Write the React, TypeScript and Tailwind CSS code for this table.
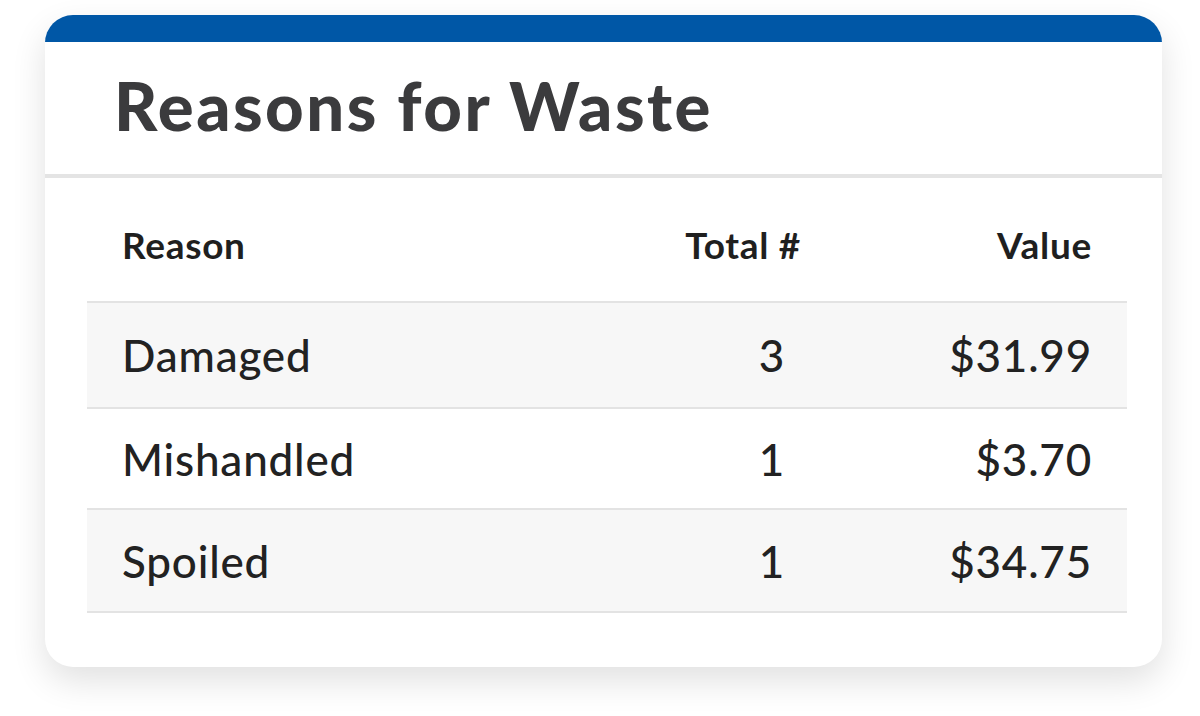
const rows = [
  { reason: "Damaged", total: 3, value: "$31.99", shaded: true, h: "h-[106px]" },
  { reason: "Mishandled", total: 1, value: "$3.70", shaded: false, h: "h-[101px]" },
  { reason: "Spoiled", total: 1, value: "$34.75", shaded: true, h: "h-[103px]" },
];

export default function App() {
  return (
    <div className="min-h-[716px] w-[1200px] bg-white pt-[15px] pl-[45px]" style={{ fontFamily: "Lato, 'Noto Sans', sans-serif" }}>
      <div className="w-[1117px] h-[652px] rounded-[28px] bg-white overflow-hidden shadow-[0_14px_34px_rgba(0,0,0,0.12)]">
        <div className="h-[27px] bg-[#0057a6]" />
        <div className="h-[132px] pt-[30px] pl-[69px]">
          <h1 className="text-[67px] leading-none font-black tracking-[2.5px] text-[#3b3b3d]">Reasons for Waste</h1>
        </div>
        <div className="h-[4px] bg-[#e4e4e4]" />

        <div className="pl-[42px] pr-[35px]">
          <div className="flex items-start h-[125px] pt-[48px] px-[35px] text-[37px] leading-none font-bold tracking-[0.7px] text-[#1f1f1f] border-b-2 border-[#e3e3e3]">
            <div className="flex-1">Reason</div>
            <div className="w-[150px] text-right">Total #</div>
            <div className="w-[291px] text-right">Value</div>
          </div>
          {rows.map((r) => (
            <div
              key={r.reason}
              className={`flex items-center ${r.h} px-[35px] text-[44px] leading-none font-medium tracking-[0.8px] text-[#222222] border-b-2 border-[#e3e3e3] ${r.shaded ? "bg-[#f7f7f7]" : "bg-white"}`}
            >
              <div className="flex-1">{r.reason}</div>
              <div className="w-[150px] text-right pr-[16px]">{r.total}</div>
              <div className="w-[291px] text-right">{r.value}</div>
            </div>
          ))}
        </div>
      </div>
    </div>
  );
}
